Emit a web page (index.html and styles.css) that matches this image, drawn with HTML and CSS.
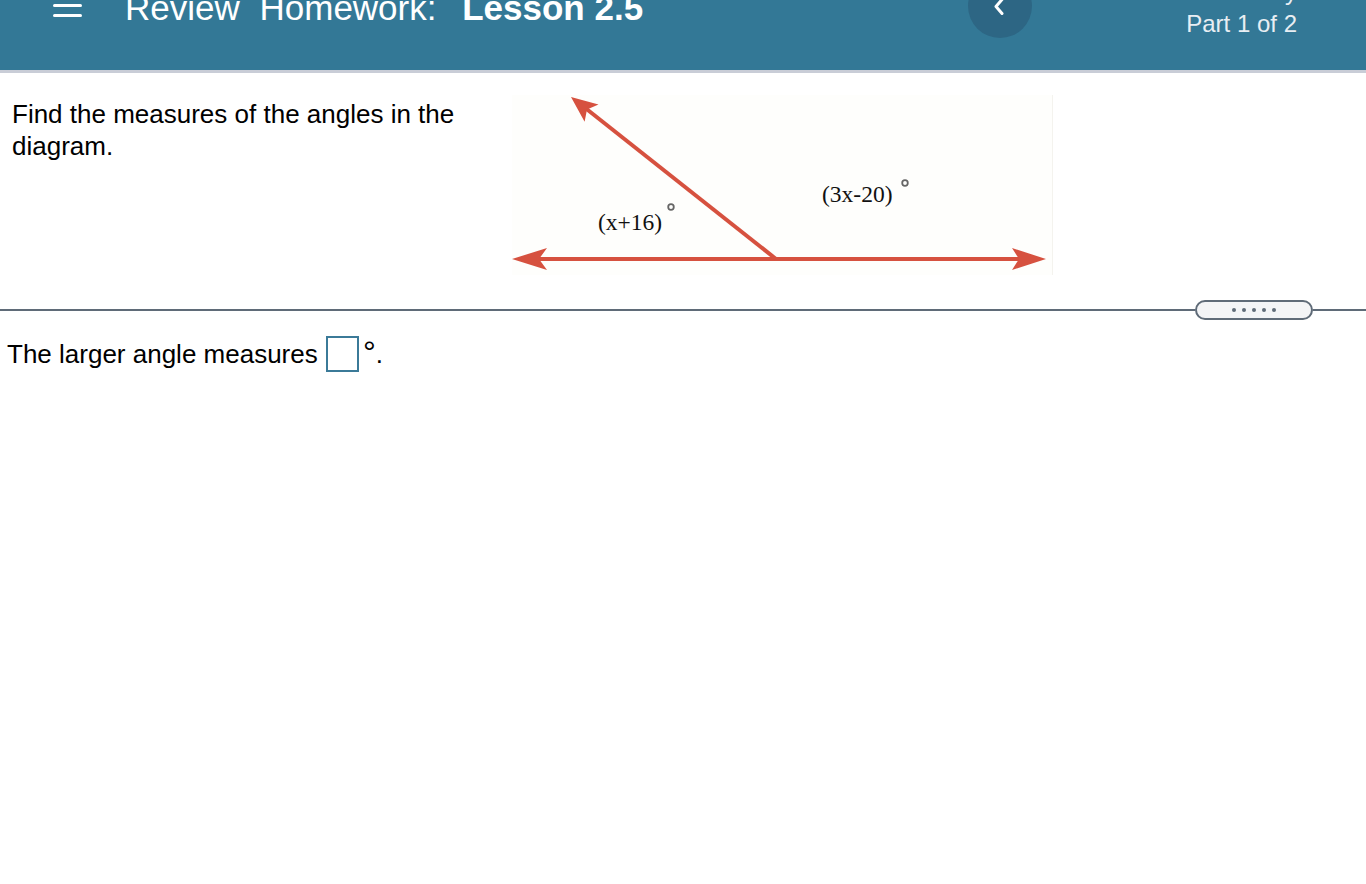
FILE: index.html
```html
<!DOCTYPE html>
<html lang="en">
<head>
<meta charset="utf-8">
<title>Review Homework: Lesson 2.5</title>
<link rel="stylesheet" href="styles.css">
</head>
<body>
<header class="topbar">
  <div class="menu" aria-label="Menu"><span></span><span></span></div>
  <h1 class="title"><span class="title-pre">Review Homework:</span> <b>Lesson 2.5</b></h1>
  <button class="back" aria-label="Previous">
    <svg width="12" height="18" viewBox="0 0 12 18"><path d="M9 1.5 L3 8.5 L9 15.5" fill="none" stroke="#fff" stroke-width="3" stroke-linecap="round" stroke-linejoin="round"/></svg>
  </button>
  <div class="progress">
    <div class="progress-top">Review Summary</div>
    <div class="progress-part">Part 1 of 2</div>
  </div>
</header>

<main>
  <section class="question">
    <p class="prompt">Find the measures of the angles in the diagram.</p>
    <div class="figure">
      <svg width="540" height="180" viewBox="0 0 540 180">
        <g stroke="#d6513f" stroke-width="4" fill="none" stroke-linecap="butt">
          <line x1="20" y1="164" x2="516" y2="164"/>
          <line x1="264" y1="164" x2="72" y2="12"/>
        </g>
        <g fill="#d6513f">
          <polygon points="0,164 35,153 27,164 35,175"/>
          <polygon points="534,164 500,153 507,164 500,175"/>
          <polygon points="59,2 86.5,9.5 75,14.5 72.6,26.7"/>
        </g>
        <text x="86" y="135" class="lbl">(x+16)</text>
        <circle cx="159" cy="112" r="2.8" fill="none" stroke="#666" stroke-width="1.8"/>
        <text x="310" y="107" class="lbl">(3x-20)</text>
        <circle cx="393" cy="88" r="2.8" fill="none" stroke="#666" stroke-width="1.8"/>
      </svg>
    </div>
  </section>

  <div class="divider">
    <div class="rule"></div>
    <div class="pill"><i></i><i></i><i></i><i></i><i></i></div>
    <div class="rule end"></div>
  </div>

  <p class="answer">The larger angle measures <span class="box"></span><span class="deg">°</span>.</p>
</main>
</body>
</html>
```

FILE: styles.css
```css
html, body {
  margin: 0;
  padding: 0;
  background: #ffffff;
}
body {
  font-family: "Liberation Sans", Arial, sans-serif;
  color: #000;
  overflow: hidden;
}

.topbar {
  height: 70px;
  background: #337896;
  border-bottom: 3px solid #c9cdd7;
  display: flex;
  align-items: flex-start;
  overflow: visible;
}
.menu {
  margin-left: 53px;
  margin-top: 4px;
  width: 29px;
  display: flex;
  flex-direction: column;
  gap: 7px;
}
.menu span {
  display: block;
  height: 3px;
  background: #ffffff;
  border-radius: 2px;
}
.title {
  margin: -12px 0 0 43px;
  font-size: 35px;
  line-height: 40px;
  font-weight: normal;
  color: #ffffff;
  white-space: nowrap;
  word-spacing: 10px;
}
.title b {
  font-weight: bold;
  word-spacing: 0;
  margin-left: 6px;
}
.back {
  margin-left: auto;
  margin-top: -26px;
  width: 64px;
  height: 64px;
  border-radius: 50%;
  border: none;
  background: #2d6684;
  padding: 0;
  display: flex;
  align-items: flex-end;
  justify-content: center;
  padding-bottom: 22px;
  box-sizing: border-box;
}
.back svg {
  display: block;
  margin-right: 2px;
}
.progress {
  width: 200px;
  margin: -22px 69px 0 65px;
  text-align: right;
  color: #e8eef3;
  font-size: 24px;
  line-height: 28px;
  white-space: nowrap;
}
.progress-part {
  margin-top: 4px;
}

.question {
  display: flex;
  align-items: flex-start;
  height: 227px;
}
.prompt {
  width: 460px;
  margin: 25px 0 0 12px;
  font-size: 26px;
  line-height: 32px;
}
.figure {
  margin: 22px 0 0 40px;
  width: 540px;
  height: 180px;
  background: #fefefc;
  border-right: 1px solid #f4f3ee;
}
.figure svg {
  display: block;
}
.lbl {
  font-family: "Liberation Serif", "Times New Roman", serif;
  font-size: 23.5px;
  fill: #111;
}

.divider {
  display: flex;
  align-items: center;
  height: 20px;
}
.rule {
  flex: 1;
  height: 2px;
  background: #5f6b78;
}
.rule.end {
  flex: 0 0 53px;
}
.pill {
  box-sizing: border-box;
  width: 118px;
  height: 20px;
  border: 2px solid #5f6b78;
  border-radius: 10px;
  background: #f3f4f6;
  display: flex;
  align-items: center;
  justify-content: center;
  gap: 6px;
}
.pill i {
  width: 4px;
  height: 4px;
  border-radius: 50%;
  background: #5f6b78;
}

.answer {
  margin: 16px 0 0 7px;
  font-size: 26px;
  line-height: 36px;
  white-space: nowrap;
}
.box {
  display: inline-block;
  box-sizing: border-box;
  width: 33px;
  height: 36px;
  border: 2px solid #3b7a98;
  vertical-align: top;
  margin-left: 1px;
  background: #fff;
}
.deg {
  display: inline-block;
  margin-left: 4px;
  font-size: 32px;
  line-height: 36px;
  vertical-align: top;
  position: relative;
  top: -2px;
}
```
